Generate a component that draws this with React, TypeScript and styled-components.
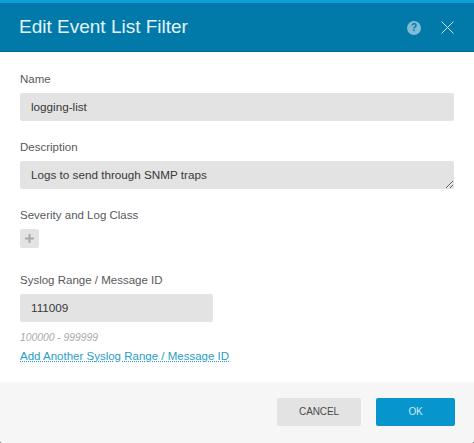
import { createGlobalStyle } from "styled-components";
import styled from "styled-components";

const GlobalStyle = createGlobalStyle`
  html, body {
    margin: 0;
    padding: 0;
    background: #6a6a6a;
  }
  body {
    font-family: "Liberation Sans", Arial, sans-serif;
  }
`;

const App = () => {
  return (
    <Dialog>
      <GlobalStyle />
      <Header>
        <Title>Edit Event List Filter</Title>
        <HeaderIcons>
          <HelpIcon>?</HelpIcon>
          <svg width="13" height="13" viewBox="0 0 13 13" fill="none" stroke="#c4e6f2" strokeWidth="1">
            <path d="M0.5 0.5l12 12M12.5 0.5l-12 12" />
          </svg>
        </HeaderIcons>
      </Header>
      <Body>
        <Field>
          <Label>Name</Label>
          <Input defaultValue="logging-list" />
        </Field>
        <Field>
          <Label>Description</Label>
          <TextArea defaultValue="Logs to send through SNMP traps" />
        </Field>
        <Field $spaced>
          <Label>Severity and Log Class</Label>
          <AddButton type="button">
            <svg width="11" height="11" viewBox="0 0 11 11" fill="none" stroke="#a9a9a9" strokeWidth="2">
              <path d="M5.5 1v9M1 5.5h9" />
            </svg>
          </AddButton>
        </Field>
        <Field>
          <Label>Syslog Range / Message ID</Label>
          <Input defaultValue="111009" $short />
          <Hint>100000 - 999999</Hint>
          <AddLink href="#">Add Another Syslog Range / Message ID</AddLink>
        </Field>
      </Body>
      <Footer>
        <Button type="button" $width={84}>CANCEL</Button>
        <Button type="button" $width={79} $primary>OK</Button>
      </Footer>
    </Dialog>
  );
};

export default App;

const Dialog = styled.div`
  width: 474px;
  height: 443px;
  display: flex;
  flex-direction: column;
  overflow: hidden;
  background: #ffffff;
  border-radius: 0 0 3px 3px;
`;

const Header = styled.div`
  height: 49px;
  border-top: 3px solid #0b9fd8;
  background: #0179a9;
  box-shadow: inset 0 -1px 0 #06688f;
  box-sizing: content-box;
  display: flex;
  align-items: center;
  justify-content: space-between;
  padding: 0 20px 0 19px;
`;

const Title = styled.h1`
  margin: 0 0 1px;
  font-size: 19px;
  font-weight: 400;
  color: #e3f3f9;
`;

const HeaderIcons = styled.div`
  display: flex;
  align-items: center;
  gap: 20px;
`;

const HelpIcon = styled.span`
  width: 14px;
  height: 14px;
  border-radius: 50%;
  background: #7fbcd6;
  color: #0179a9;
  font-size: 10px;
  font-weight: 700;
  line-height: 14px;
  text-align: center;
`;

const Body = styled.div`
  flex: 1;
  padding: 20px 20px 0;
  display: flex;
  flex-direction: column;
  gap: 19px;
`;

const Field = styled.div<{ $spaced?: boolean }>`
  display: flex;
  flex-direction: column;
  margin-bottom: ${(p) => (p.$spaced ? "6px" : "0")};
`;

const Label = styled.label`
  font-size: 11.5px;
  line-height: 15px;
  margin-bottom: 6px;
  color: #58585b;
`;

const Input = styled.input<{ $short?: boolean }>`
  width: ${(p) => (p.$short ? "193px" : "434px")};
  height: 28px;
  box-sizing: border-box;
  border: none;
  border-radius: 2px;
  padding: 0 11px 1px;
  background: #e3e3e3;
  font-family: inherit;
  font-size: 11.7px;
  color: #39393b;
`;

const TextArea = styled.textarea`
  width: 434px;
  height: 28px;
  box-sizing: border-box;
  border: none;
  border-radius: 2px;
  padding: 6px 11px;
  background: #e3e3e3;
  font-family: inherit;
  font-size: 11.7px;
  line-height: 15px;
  color: #39393b;
`;

const AddButton = styled.button`
  width: 19px;
  height: 19px;
  padding: 0;
  border: none;
  border-radius: 2px;
  background: #e3e3e3;
  display: flex;
  align-items: center;
  justify-content: center;
`;

const Hint = styled.div`
  margin-top: 10px;
  font-size: 10.3px;
  line-height: 12px;
  font-style: italic;
  color: #aaaaaa;
`;

const AddLink = styled.a`
  margin-top: 5px;
  align-self: flex-start;
  font-size: 11.5px;
  line-height: 15px;
  color: #2b9cc4;
  text-decoration: underline dotted;
`;

const Footer = styled.div`
  height: 61px;
  box-sizing: border-box;
  background: #f6f6f6;
  display: flex;
  justify-content: flex-end;
  align-items: flex-start;
  gap: 15px;
  padding: 16px 19px 0 0;
`;

const Button = styled.button<{ $width: number; $primary?: boolean }>`
  width: ${(p) => p.$width}px;
  height: 28px;
  border: none;
  border-radius: 2px;
  padding: 0 0 2px;
  background: ${(p) => (p.$primary ? "#0795cd" : "#e3e3e3")};
  color: ${(p) => (p.$primary ? "#cfeaf5" : "#4a4a4c")};
  font-family: inherit;
  font-size: 10px;
  letter-spacing: -0.1px;
`;
